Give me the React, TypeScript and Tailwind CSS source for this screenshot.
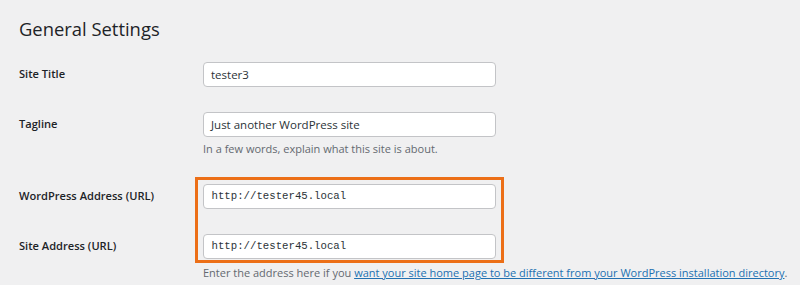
import React from "react";

const font = { fontFamily: '"Open Sans", "Noto Sans", sans-serif' };

function Input({ value, mono }: { value: string; mono?: boolean }) {
  return (
    <div className="h-[25px] w-[293px] shrink-0 rounded-[4px] border border-[#c3c4c7] bg-white flex items-center px-[7px]">
      <span
        className={
          mono
            ? "text-[10.7px] text-[#2c3338] font-['Liberation_Mono',monospace] pl-[1px]"
            : "text-[11.5px] text-[#2c3338]"
        }
      >
        {value}
      </span>
    </div>
  );
}

export default function App() {
  return (
    <div className="w-[800px] h-[285px] bg-[#f0f0f1] overflow-hidden text-[#1d2327]" style={font}>
      <div className="pl-[19px] pt-[15px]">
        <h1 className="text-[18.4px] leading-[28px] font-normal text-[#1d2327]">General Settings</h1>

        <div className="mt-[19px] grid grid-cols-[184px_auto]">
          <div className="h-[25px] flex items-center text-[11.1px] font-semibold">Site Title</div>
          <div>
            <Input value="tester3" />
          </div>

          <div className="mt-[25px] h-[25px] flex items-center text-[11.1px] font-semibold">Tagline</div>
          <div className="mt-[25px]">
            <Input value="Just another WordPress site" />
            <p className="mt-[5px] text-[11px] leading-[14px] text-[#646970]">
              In a few words, explain what this site is about.
            </p>
          </div>
        </div>

        <div className="mt-[21px] flex">
          <div className="w-[176px] shrink-0 pt-[7px] flex flex-col">
            <div className="h-[25px] flex items-center text-[11.1px] font-semibold">WordPress Address (URL)</div>
            <div className="mt-[25px] h-[25px] flex items-center text-[11.1px] font-semibold">Site Address (URL)</div>
          </div>
          <div className="flex flex-col">
            <div className="border-[3.5px] border-[#ec6f17] w-[309px] pl-[4.5px] pt-[3.5px] pb-[1.5px] flex flex-col gap-[25px]">
              <Input value="http://tester45.local" mono />
              <Input value="http://tester45.local" mono />
            </div>
            <p className="mt-[3px] ml-[8px] text-[11px] leading-[14px] text-[#646970] whitespace-nowrap">
              Enter the address here if you{" "}
              <a className="text-[#2271b1] underline">
                want your site home page to be different from your WordPress installation directory
              </a>
              .
            </p>
          </div>
        </div>
      </div>
    </div>
  );
}
